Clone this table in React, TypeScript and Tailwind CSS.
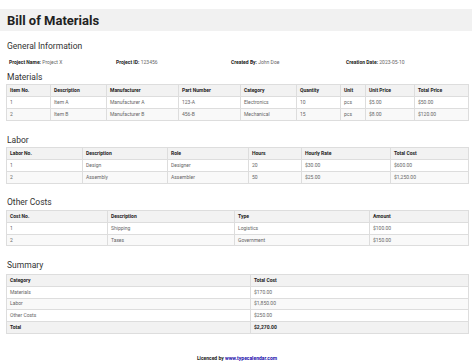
const materials = [
  ["1", "Item A", "Manufacturer A", "123-A", "Electronics", "10", "pcs", "$5.00", "$50.00"],
  ["2", "Item B", "Manufacturer B", "456-B", "Mechanical", "15", "pcs", "$8.00", "$120.00"],
];

const labor = [
  ["1", "Design", "Designer", "20", "$30.00", "$600.00"],
  ["2", "Assembly", "Assembler", "50", "$25.00", "$1,250.00"],
];

const otherCosts = [
  ["1", "Shipping", "Logistics", "$100.00"],
  ["2", "Taxes", "Government", "$150.00"],
];

const Table = ({ headers, widths, rows, total }: { headers: string[]; widths: number[]; rows: string[][]; total?: string[] }) => (
  <table className="w-[462px] border-collapse table-fixed text-[5px] leading-none">
    <colgroup>
      {widths.map((w, i) => (
        <col key={i} style={{ width: w }} />
      ))}
    </colgroup>
    <thead>
      <tr className="h-[12px] bg-[#f2f2f2]">
        {headers.map((h) => (
          <th key={h} className="border border-[#dddddd] px-[3px] text-left font-bold text-[#222]">
            {h}
          </th>
        ))}
      </tr>
    </thead>
    <tbody>
      {rows.map((r, i) => (
        <tr key={i} className={`h-[11.7px] ${i % 2 === 1 ? "bg-[#f9f9f9]" : "bg-white"}`}>
          {r.map((c, j) => (
            <td key={j} className="border border-[#dddddd] px-[3px] text-[#666]">
              {c}
            </td>
          ))}
        </tr>
      ))}
      {total && (
        <tr className="h-[12px] bg-[#f2f2f2]">
          {total.map((c, j) => (
            <td key={j} className="border border-[#dddddd] px-[3px] font-bold text-[#222]">
              {c}
            </td>
          ))}
        </tr>
      )}
    </tbody>
  </table>
);

const Heading = ({ children, className }: { children: string; className?: string }) => (
  <h2 className={`px-[7px] text-[8.5px] leading-none text-[#333] ${className ?? ""}`}>{children}</h2>
);

export default function App() {
  return (
    <div className="w-[474px] h-[361px] bg-white font-['Roboto',sans-serif] flex flex-col overflow-hidden">
      <div className="mt-[9px] w-[472px] h-[28px] bg-[#f1f1f1] flex items-center px-[7px]">
        <h1 className="text-[13px] font-bold text-[#222] leading-none">Bill of Materials</h1>
      </div>

      <Heading className="mt-[11px]">General Information</Heading>
      <div className="mt-[9px] flex px-[9px] text-[5px] leading-none text-[#666]">
        <div className="w-[107px]"><b className="text-[#222]">Project Name:</b> Project X</div>
        <div className="w-[115px]"><b className="text-[#222]">Project ID:</b> 123456</div>
        <div className="w-[115px]"><b className="text-[#222]">Created By:</b> John Doe</div>
        <div><b className="text-[#222]">Creation Date:</b> 2023-05-10</div>
      </div>

      <Heading className="mt-[8px]">Materials</Heading>
      <div className="mt-[3px] px-[6px]">
        <Table
          headers={["Item No.", "Description", "Manufacturer", "Part Number", "Category", "Quantity", "Unit", "Unit Price", "Total Price"]}
          widths={[44, 56, 72, 62, 56, 44, 25, 49, 54]}
          rows={materials}
        />
      </div>

      <Heading className="mt-[15px]">Labor</Heading>
      <div className="mt-[3px] px-[6px]">
        <Table
          headers={["Labor No.", "Description", "Role", "Hours", "Hourly Rate", "Total Cost"]}
          widths={[76, 85, 81, 53, 89, 78]}
          rows={labor}
        />
      </div>

      <Heading className="mt-[14px]">Other Costs</Heading>
      <div className="mt-[4px] px-[6px]">
        <Table
          headers={["Cost No.", "Description", "Type", "Amount"]}
          widths={[101, 127, 135, 99]}
          rows={otherCosts}
        />
      </div>

      <Heading className="mt-[15px]">Summary</Heading>
      <div className="mt-[4px] px-[6px]">
        <Table
          headers={["Category", "Total Cost"]}
          widths={[244, 218]}
          rows={[
            ["Materials", "$170.00"],
            ["Labor", "$1,850.00"],
            ["Other Costs", "$250.00"],
          ]}
          total={["Total", "$2,270.00"]}
        />
      </div>

      <p className="mt-[22px] text-center text-[5px] font-bold text-[#222] leading-none">
        Licenced by <a href="#" className="text-[#1a0dab] underline">www.typecalendar.com</a>
      </p>
    </div>
  );
}
